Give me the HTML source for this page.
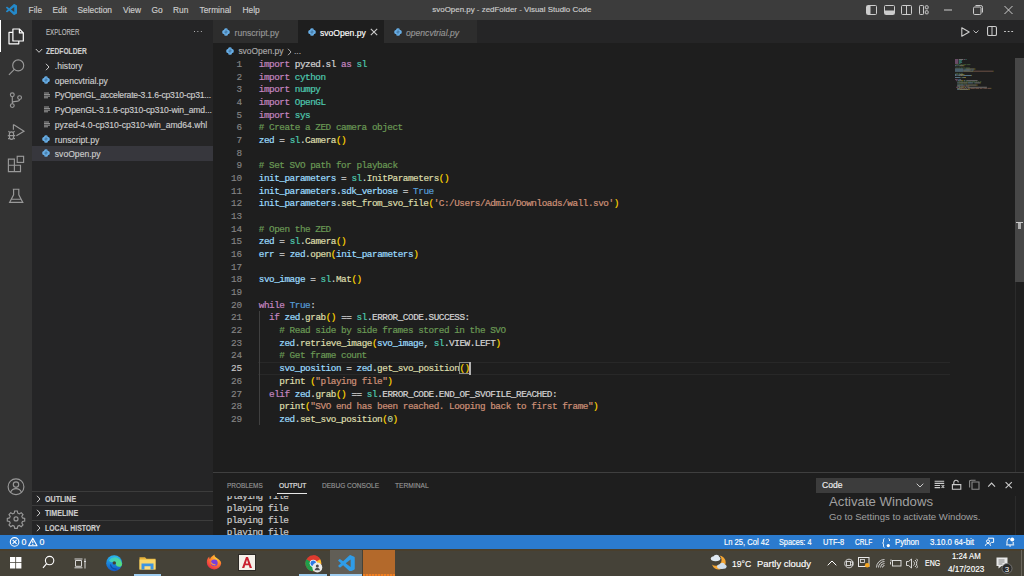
<!DOCTYPE html>
<html><head><meta charset="utf-8">
<style>
*{margin:0;padding:0;box-sizing:border-box}
html,body{width:1024px;height:576px;overflow:hidden;background:#1e1e1e;font-family:"Liberation Sans",sans-serif;position:relative}
.a{position:absolute}
.ui{position:absolute;font-family:"Liberation Sans",sans-serif;font-size:8.6px;color:#cccccc;white-space:nowrap;line-height:10px;height:10px;-webkit-text-stroke:0.15px currentColor}
.mono{font-family:"Liberation Mono",monospace;font-size:9.33px;letter-spacing:-0.455px;white-space:pre;line-height:12.67px;height:12.67px}
.ln{position:absolute;left:213.7px;width:28px;text-align:right;color:#858585;letter-spacing:-0.3px}
.ln.act{color:#c6c6c6}
.ln{-webkit-text-stroke:0.15px currentColor}
.code{position:absolute;left:258.75px;color:#d4d4d4;-webkit-text-stroke:0.2px currentColor}
.k{color:#c586c0}.t{color:#4ec9b0}.v{color:#9cdcfe}.f{color:#dcdcaa}.c{color:#6a9955}.s{color:#ce9178}.b{color:#569cd6}.y{color:#ffd700}.n{color:#b5cea8}.w{color:#d4d4d4}
svg{display:block}
.icon{position:absolute}
</style></head><body>
<!-- title bar -->
<div class="a" style="left:0;top:0;width:1024px;height:20px;background:#3c3c3c"></div>
<svg class="icon" style="left:6px;top:4px" width="11" height="11" viewBox="0 0 100 100"><path fill="#2489ca" d="M96.5 10.8 75.9.9a6.2 6.2 0 0 0-7.1 1.2L29.4 38 12.2 25a4.2 4.2 0 0 0-5.3.2L1.4 30.2a4.2 4.2 0 0 0 0 6.2L16.3 50 1.4 63.6a4.2 4.2 0 0 0 0 6.2l5.5 5a4.2 4.2 0 0 0 5.3.2l17.2-13L68.8 98a6.2 6.2 0 0 0 7.1 1.2l20.6-9.9a6.2 6.2 0 0 0 3.5-5.6V16.4a6.2 6.2 0 0 0-3.5-5.6ZM75 72.7 45.1 50 75 27.3Z"/></svg>
<div class="ui" style="left:28.6px;top:5px;font-size:8.4px">File</div>
<div class="ui" style="left:52.5px;top:5px;font-size:8.4px">Edit</div>
<div class="ui" style="left:77.5px;top:5px;font-size:8.4px">Selection</div>
<div class="ui" style="left:123px;top:5px;font-size:8.4px">View</div>
<div class="ui" style="left:151.5px;top:5px;font-size:8.4px">Go</div>
<div class="ui" style="left:173px;top:5px;font-size:8.4px">Run</div>
<div class="ui" style="left:199.5px;top:5px;font-size:8.4px">Terminal</div>
<div class="ui" style="left:242.5px;top:5px;font-size:8.4px">Help</div>
<div class="ui" style="left:432.3px;top:5px;font-size:7.95px">svoOpen.py - zedFolder - Visual Studio Code</div>
<!-- layout icons -->
<svg class="icon" style="left:866px;top:5px" width="11" height="10" viewBox="0 0 11 10"><rect x="0.5" y="0.5" width="10" height="9" rx="1" fill="none" stroke="#cccccc"/><rect x="1" y="1" width="3.5" height="8" fill="#cccccc"/></svg>
<svg class="icon" style="left:883.5px;top:5px" width="11" height="10" viewBox="0 0 11 10"><rect x="0.5" y="0.5" width="10" height="9" rx="1" fill="none" stroke="#cccccc"/><rect x="1" y="5.5" width="9" height="3.5" fill="#cccccc"/></svg>
<svg class="icon" style="left:900.5px;top:5px" width="11" height="10" viewBox="0 0 11 10"><rect x="0.5" y="0.5" width="10" height="9" rx="1" fill="none" stroke="#cccccc"/><path d="M5.5 1v8" stroke="#cccccc"/></svg>
<svg class="icon" style="left:918.5px;top:5px" width="10" height="10" viewBox="0 0 10 10"><rect x="0.5" y="0.5" width="4" height="9" rx="0.8" fill="none" stroke="#cccccc"/><rect x="6.3" y="0.8" width="2.8" height="3" rx="0.6" fill="none" stroke="#cccccc"/><rect x="6.3" y="5.8" width="2.8" height="3" rx="0.6" fill="none" stroke="#cccccc"/></svg>
<svg class="icon" style="left:944px;top:9px" width="8" height="2" viewBox="0 0 8 2"><path d="M0 1h8" stroke="#cccccc" stroke-width="1"/></svg>
<svg class="icon" style="left:973px;top:5px" width="10" height="10" viewBox="0 0 10 10"><rect x="0.5" y="2" width="7.5" height="7.5" rx="1.2" fill="none" stroke="#cccccc"/><path d="M2.5 0.5h5.2a1.8 1.8 0 0 1 1.8 1.8v5.2" fill="none" stroke="#cccccc"/></svg>
<svg class="icon" style="left:1004px;top:5px" width="9" height="10" viewBox="0 0 9 10"><path d="M0.5 1l8 8M8.5 1l-8 8" stroke="#cccccc" stroke-width="1"/></svg>

<!-- activity bar -->
<div class="a" style="left:0;top:20px;width:32px;height:515px;background:#333333"></div>
<div class="a" style="left:0;top:20px;width:1.2px;height:32px;background:#ffffff"></div>
<svg class="icon" style="left:0;top:20px" width="32" height="515" viewBox="0 20 32 515">
<g fill="none" stroke="#ffffff" stroke-width="1.2" stroke-linejoin="round"><path d="M12.9 29h6.5l3.9 3.9v8.1H12.9z"/><path d="M19.4 29v3.9h3.9"/><path d="M12.9 32.4H9v11.4h9.8V41"/></g>
<g fill="none" stroke="#999999" stroke-width="1.15">
<circle cx="18.2" cy="65.4" r="5.5"/><path d="M14.3 69.4 8.9 74.8"/>
<circle cx="12.3" cy="94.8" r="1.9"/><circle cx="12.3" cy="105.6" r="1.9"/><circle cx="19.6" cy="97.6" r="1.9"/><path d="M12.3 96.7v7M19.6 99.5c0 1.8-1.5 1.8-3.6 1.8s-3.7 0.3-3.7 1.6"/>
<path d="M13.4 124.6v5.2M13.4 124.6l10.6 6.6-7.6 4.6"/><path d="M9.4 134.2c0-1.4.9-2.3 2.1-2.3s2.1.9 2.1 2.3v2.6c0 1.6-.9 2.6-2.1 2.6s-2.1-1-2.1-2.6z"/><path d="M7.8 135.6h7.4M8 138.6h1.4M13.6 138.6h1.4M9.6 132.3l-1.2-1M13.4 132.3l1.2-1"/>
<path d="M8.4 159.1h6v6.1h6.1v6.4H8.4z"/><path d="M8.4 165.2h6v6.4"/><rect x="17.2" y="156.3" width="6.4" height="6.1"/>
<path d="M12.8 189.2h6.6M13.6 189.2v5.6L9.6 202.4h13.2l-4-7.6v-5.6M11.4 199.2h9.6"/>
<circle cx="16" cy="486.7" r="7.9"/><circle cx="16" cy="484.6" r="2.7"/><path d="M10.6 492.3c1-2.4 3-3.6 5.4-3.6s4.4 1.2 5.4 3.6"/>
<circle cx="16" cy="518.9" r="2"/><path d="M14.7 511h2.6l.5 2.2 1.5.7 1.9-1.2 1.8 1.8-1.2 1.9.7 1.5 2.2.5v2.6l-2.2.5-.7 1.5 1.2 1.9-1.8 1.8-1.9-1.2-1.5.7-.5 2.2h-2.6l-.5-2.2-1.5-.7-1.9 1.2-1.8-1.8 1.2-1.9-.7-1.5-2.2-.5v-2.6l2.2-.5.7-1.5-1.2-1.9 1.8-1.8 1.9 1.2 1.5-.7z"/>
</g></svg>

<!-- sidebar -->
<div class="a" style="left:32px;top:20px;width:181px;height:515px;background:#252526"></div>
<div class="ui" style="left:45.6px;top:26.9px;font-size:8.5px;line-height:10px;height:10px;color:#bbbbbb;transform:scaleX(0.721);transform-origin:0 0">EXPLORER</div>
<div class="a" style="left:193.7px;top:30.6px;width:1.8px;height:1.8px;border-radius:50%;background:#e0e0e0;box-shadow:3.4px 0 0 #e0e0e0,6.8px 0 0 #e0e0e0"></div>
<svg class="icon" style="left:35px;top:47.5px" width="8" height="6" viewBox="0 0 8 6"><path d="M0.8 1l3.2 3.3L7.2 1" fill="none" stroke="#cccccc" stroke-width="1"/></svg>
<div class="ui" style="left:45.5px;top:45.9px;font-size:8.4px;line-height:10px;height:10px;color:#cccccc;font-weight:bold;transform:scaleX(0.795);transform-origin:0 0">ZEDFOLDER</div>
<svg class="icon" style="left:45px;top:62.5px" width="5" height="8" viewBox="0 0 5 8"><path d="M1 0.8l3 3.2-3 3.2" fill="none" stroke="#cccccc" stroke-width="1"/></svg>
<div class="ui" style="left:54.8px;top:61px">.history</div>
<div class="icon" style="left:42.5px;top:76.5px"><svg width="8" height="8" viewBox="0 0 16 16" style="margin:-0.2px 0 0 -0.5px"><g fill="#68aee6"><rect x="4.2" y="0.6" width="7.6" height="14.8" rx="3"/><rect x="0.6" y="4.2" width="14.8" height="7.6" rx="3"/></g><path d="M4.5 8.2h3.5v3.5" fill="none" stroke="#2a4f70" stroke-width="1.1"/><path d="M11.5 7.8H8V4.3" fill="none" stroke="#2a4f70" stroke-width="1.1"/><circle cx="10.2" cy="2.8" r="0.9" fill="#2a4f70"/><circle cx="5.8" cy="13.2" r="0.9" fill="#2a4f70"/></svg></div>
<div class="ui" style="left:54.8px;top:75.8px">opencvtrial.py</div>
<div class="icon" style="left:43px;top:91.5px"><svg width="8" height="8" viewBox="0 0 8 8"><path d="M1 1h5M1 2.6h6M1 4.2h6M1 5.8h4" stroke="#a8a8a8" stroke-width="0.9"/></svg></div>
<div class="ui" style="left:54.8px;top:90.3px;letter-spacing:-0.2px">PyOpenGL_accelerate-3.1.6-cp310-cp31...</div>
<div class="icon" style="left:43px;top:106px"><svg width="8" height="8" viewBox="0 0 8 8"><path d="M1 1h5M1 2.6h6M1 4.2h6M1 5.8h4" stroke="#a8a8a8" stroke-width="0.9"/></svg></div>
<div class="ui" style="left:54.8px;top:105px;letter-spacing:-0.12px">PyOpenGL-3.1.6-cp310-cp310-win_amd...</div>
<div class="icon" style="left:43px;top:120.7px"><svg width="8" height="8" viewBox="0 0 8 8"><path d="M1 1h5M1 2.6h6M1 4.2h6M1 5.8h4" stroke="#a8a8a8" stroke-width="0.9"/></svg></div>
<div class="ui" style="left:54.8px;top:119.6px">pyzed-4.0-cp310-cp310-win_amd64.whl</div>
<div class="icon" style="left:42.5px;top:135.5px"><svg width="8" height="8" viewBox="0 0 16 16" style="margin:-0.2px 0 0 -0.5px"><g fill="#68aee6"><rect x="4.2" y="0.6" width="7.6" height="14.8" rx="3"/><rect x="0.6" y="4.2" width="14.8" height="7.6" rx="3"/></g><path d="M4.5 8.2h3.5v3.5" fill="none" stroke="#2a4f70" stroke-width="1.1"/><path d="M11.5 7.8H8V4.3" fill="none" stroke="#2a4f70" stroke-width="1.1"/><circle cx="10.2" cy="2.8" r="0.9" fill="#2a4f70"/><circle cx="5.8" cy="13.2" r="0.9" fill="#2a4f70"/></svg></div>
<div class="ui" style="left:54.8px;top:134.8px">runscript.py</div>
<div class="a" style="left:32px;top:146.3px;width:181px;height:14.7px;background:#37373d"></div>
<div class="icon" style="left:42.5px;top:149.5px"><svg width="8" height="8" viewBox="0 0 16 16" style="margin:-0.2px 0 0 -0.5px"><g fill="#68aee6"><rect x="4.2" y="0.6" width="7.6" height="14.8" rx="3"/><rect x="0.6" y="4.2" width="14.8" height="7.6" rx="3"/></g><path d="M4.5 8.2h3.5v3.5" fill="none" stroke="#2a4f70" stroke-width="1.1"/><path d="M11.5 7.8H8V4.3" fill="none" stroke="#2a4f70" stroke-width="1.1"/><circle cx="10.2" cy="2.8" r="0.9" fill="#2a4f70"/><circle cx="5.8" cy="13.2" r="0.9" fill="#2a4f70"/></svg></div>
<div class="ui" style="left:54.8px;top:148.5px">svoOpen.py</div>
<!-- sidebar bottom sections -->
<div class="a" style="left:32px;top:490.5px;width:181px;height:1px;background:#3c3c3c"></div>
<div class="a" style="left:32px;top:505px;width:181px;height:1px;background:#3c3c3c"></div>
<div class="a" style="left:32px;top:519.7px;width:181px;height:1px;background:#3c3c3c"></div>
<svg class="icon" style="left:36px;top:494.5px" width="5" height="8" viewBox="0 0 5 8"><path d="M1 0.8l3 3.2-3 3.2" fill="none" stroke="#cccccc" stroke-width="1"/></svg>
<div class="ui" style="left:45.3px;top:495px;font-size:8.2px;line-height:10px;height:10px;color:#cccccc;font-weight:bold;transform:scaleX(0.868);transform-origin:0 0">OUTLINE</div>
<svg class="icon" style="left:36px;top:509px" width="5" height="8" viewBox="0 0 5 8"><path d="M1 0.8l3 3.2-3 3.2" fill="none" stroke="#cccccc" stroke-width="1"/></svg>
<div class="ui" style="left:45.3px;top:509.1px;font-size:8.2px;line-height:10px;height:10px;color:#cccccc;font-weight:bold;transform:scaleX(0.869);transform-origin:0 0">TIMELINE</div>
<svg class="icon" style="left:36px;top:524px" width="5" height="8" viewBox="0 0 5 8"><path d="M1 0.8l3 3.2-3 3.2" fill="none" stroke="#cccccc" stroke-width="1"/></svg>
<div class="ui" style="left:45.3px;top:523.9px;font-size:8.2px;line-height:10px;height:10px;color:#cccccc;font-weight:bold;transform:scaleX(0.835);transform-origin:0 0">LOCAL HISTORY</div>

<!-- editor tabs -->
<div class="a" style="left:213px;top:20px;width:811px;height:23px;background:#252526"></div>
<div class="a" style="left:213px;top:20px;width:85px;height:23px;background:#2d2d2d"></div>
<div class="a" style="left:298px;top:20px;width:86px;height:23px;background:#1e1e1e"></div>
<div class="a" style="left:384px;top:20px;width:93px;height:23px;background:#2d2d2d"></div>
<div class="icon" style="left:222.5px;top:28px"><svg width="8" height="8" viewBox="0 0 16 16" style="margin:-0.2px 0 0 -0.5px"><g fill="#68aee6"><rect x="4.2" y="0.6" width="7.6" height="14.8" rx="3"/><rect x="0.6" y="4.2" width="14.8" height="7.6" rx="3"/></g><path d="M4.5 8.2h3.5v3.5" fill="none" stroke="#2a4f70" stroke-width="1.1"/><path d="M11.5 7.8H8V4.3" fill="none" stroke="#2a4f70" stroke-width="1.1"/><circle cx="10.2" cy="2.8" r="0.9" fill="#2a4f70"/><circle cx="5.8" cy="13.2" r="0.9" fill="#2a4f70"/></svg></div>
<div class="ui" style="left:234.6px;top:27.5px;color:#969696">runscript.py</div>
<div class="icon" style="left:308px;top:28px"><svg width="8" height="8" viewBox="0 0 16 16" style="margin:-0.2px 0 0 -0.5px"><g fill="#68aee6"><rect x="4.2" y="0.6" width="7.6" height="14.8" rx="3"/><rect x="0.6" y="4.2" width="14.8" height="7.6" rx="3"/></g><path d="M4.5 8.2h3.5v3.5" fill="none" stroke="#2a4f70" stroke-width="1.1"/><path d="M11.5 7.8H8V4.3" fill="none" stroke="#2a4f70" stroke-width="1.1"/><circle cx="10.2" cy="2.8" r="0.9" fill="#2a4f70"/><circle cx="5.8" cy="13.2" r="0.9" fill="#2a4f70"/></svg></div>
<div class="ui" style="left:320px;top:27.5px;color:#ffffff">svoOpen.py</div>
<svg class="icon" style="left:370px;top:27.5px" width="8" height="8" viewBox="0 0 8 8"><path d="M0.8 0.8l6.4 6.4M7.2 0.8L0.8 7.2" stroke="#cccccc" stroke-width="1.1"/></svg>
<div class="icon" style="left:394px;top:28px"><svg width="8" height="8" viewBox="0 0 16 16" style="margin:-0.2px 0 0 -0.5px"><g fill="#68aee6"><rect x="4.2" y="0.6" width="7.6" height="14.8" rx="3"/><rect x="0.6" y="4.2" width="14.8" height="7.6" rx="3"/></g><path d="M4.5 8.2h3.5v3.5" fill="none" stroke="#2a4f70" stroke-width="1.1"/><path d="M11.5 7.8H8V4.3" fill="none" stroke="#2a4f70" stroke-width="1.1"/><circle cx="10.2" cy="2.8" r="0.9" fill="#2a4f70"/><circle cx="5.8" cy="13.2" r="0.9" fill="#2a4f70"/></svg></div>
<div class="ui" style="left:406px;top:27.5px;color:#969696;font-style:italic">opencvtrial.py</div>
<!-- editor actions -->
<svg class="icon" style="left:961px;top:26.5px" width="9" height="10" viewBox="0 0 9 10"><path d="M0.8 0.8v8.4l7.4-4.2z" fill="none" stroke="#cccccc" stroke-width="1.1" stroke-linejoin="round"/></svg>
<svg class="icon" style="left:972.5px;top:30px" width="6" height="4" viewBox="0 0 6 4"><path d="M0.5 0.5l2.5 2.5 2.5-2.5" fill="none" stroke="#cccccc" stroke-width="0.9"/></svg>
<svg class="icon" style="left:986.7px;top:26.3px" width="10" height="10" viewBox="0 0 10 10"><rect x="0.55" y="0.55" width="8.9" height="8.9" rx="1.3" fill="none" stroke="#cccccc" stroke-width="1.1"/><path d="M5 1v8" stroke="#cccccc" stroke-width="1"/></svg>
<div class="a" style="left:1004px;top:30.6px;width:1.8px;height:1.8px;border-radius:50%;background:#cccccc;box-shadow:3.6px 0 0 #cccccc,7.2px 0 0 #cccccc"></div>

<!-- breadcrumbs -->
<div class="icon" style="left:226.5px;top:47px"><svg width="8" height="8" viewBox="0 0 16 16" style="margin:-0.2px 0 0 -0.5px"><g fill="#68aee6"><rect x="4.2" y="0.6" width="7.6" height="14.8" rx="3"/><rect x="0.6" y="4.2" width="14.8" height="7.6" rx="3"/></g><path d="M4.5 8.2h3.5v3.5" fill="none" stroke="#2a4f70" stroke-width="1.1"/><path d="M11.5 7.8H8V4.3" fill="none" stroke="#2a4f70" stroke-width="1.1"/><circle cx="10.2" cy="2.8" r="0.9" fill="#2a4f70"/><circle cx="5.8" cy="13.2" r="0.9" fill="#2a4f70"/></svg></div>
<div class="ui" style="left:238.4px;top:46px;color:#a9a9a9;font-size:8.45px">svoOpen.py</div>
<svg class="icon" style="left:286.5px;top:47.5px" width="5" height="8" viewBox="0 0 5 8"><path d="M1 0.8l3 3.2-3 3.2" fill="none" stroke="#a9a9a9" stroke-width="1"/></svg>
<div class="ui" style="left:294px;top:46px;color:#a9a9a9;font-size:8.45px">...</div>

<!-- current line highlight -->
<div class="a" style="left:258px;top:361.8px;width:692px;height:13px;border-top:1px solid #282828;border-bottom:1px solid #282828"></div>
<!-- indent guide -->
<div class="a" style="left:259px;top:311px;width:1px;height:114px;background:#404040"></div>

<div class="ln mono" style="top:59.00px">1</div>
<div class="code mono" style="top:59.00px"><span class="k">import</span> <span class="w">pyzed.sl</span> <span class="k">as</span> <span class="t">sl</span></div>
<div class="ln mono" style="top:71.67px">2</div>
<div class="code mono" style="top:71.67px"><span class="k">import</span> <span class="t">cython</span></div>
<div class="ln mono" style="top:84.35px">3</div>
<div class="code mono" style="top:84.35px"><span class="k">import</span> <span class="t">numpy</span></div>
<div class="ln mono" style="top:97.02px">4</div>
<div class="code mono" style="top:97.02px"><span class="k">import</span> <span class="t">OpenGL</span></div>
<div class="ln mono" style="top:109.69px">5</div>
<div class="code mono" style="top:109.69px"><span class="k">import</span> <span class="t">sys</span></div>
<div class="ln mono" style="top:122.37px">6</div>
<div class="code mono" style="top:122.37px"><span class="c"># Create a ZED camera object</span></div>
<div class="ln mono" style="top:135.04px">7</div>
<div class="code mono" style="top:135.04px"><span class="v">zed</span> <span class="w">=</span> <span class="t">sl</span><span class="w">.</span><span class="f">Camera</span><span class="y">()</span></div>
<div class="ln mono" style="top:147.71px">8</div>
<div class="ln mono" style="top:160.38px">9</div>
<div class="code mono" style="top:160.38px"><span class="c"># Set SVO path for playback</span></div>
<div class="ln mono" style="top:173.06px">10</div>
<div class="code mono" style="top:173.06px"><span class="v">init_parameters</span> <span class="w">=</span> <span class="t">sl</span><span class="w">.</span><span class="f">InitParameters</span><span class="y">()</span></div>
<div class="ln mono" style="top:185.73px">11</div>
<div class="code mono" style="top:185.73px"><span class="v">init_parameters</span><span class="w">.</span><span class="v">sdk_verbose</span> <span class="w">=</span> <span class="b">True</span></div>
<div class="ln mono" style="top:198.40px">12</div>
<div class="code mono" style="top:198.40px"><span class="v">init_parameters</span><span class="w">.</span><span class="f">set_from_svo_file</span><span class="y">(</span><span class="s">&#x27;C:/Users/Admin/Downloads/wall.svo&#x27;</span><span class="y">)</span></div>
<div class="ln mono" style="top:211.08px">13</div>
<div class="ln mono" style="top:223.75px">14</div>
<div class="code mono" style="top:223.75px"><span class="c"># Open the ZED</span></div>
<div class="ln mono" style="top:236.42px">15</div>
<div class="code mono" style="top:236.42px"><span class="v">zed</span> <span class="w">=</span> <span class="t">sl</span><span class="w">.</span><span class="f">Camera</span><span class="y">()</span></div>
<div class="ln mono" style="top:249.09px">16</div>
<div class="code mono" style="top:249.09px"><span class="v">err</span> <span class="w">=</span> <span class="v">zed</span><span class="w">.</span><span class="f">open</span><span class="y">(</span><span class="v">init_parameters</span><span class="y">)</span></div>
<div class="ln mono" style="top:261.77px">17</div>
<div class="ln mono" style="top:274.44px">18</div>
<div class="code mono" style="top:274.44px"><span class="v">svo_image</span> <span class="w">=</span> <span class="t">sl</span><span class="w">.</span><span class="f">Mat</span><span class="y">()</span></div>
<div class="ln mono" style="top:287.11px">19</div>
<div class="ln mono" style="top:299.79px">20</div>
<div class="code mono" style="top:299.79px"><span class="k">while</span> <span class="b">True</span><span class="w">:</span></div>
<div class="ln mono" style="top:312.46px">21</div>
<div class="code mono" style="top:312.46px">  <span class="k">if</span> <span class="v">zed</span><span class="w">.</span><span class="f">grab</span><span class="y">()</span> <span class="w">==</span> <span class="t">sl</span><span class="w">.ERROR_CODE.SUCCESS:</span></div>
<div class="ln mono" style="top:325.13px">22</div>
<div class="code mono" style="top:325.13px">    <span class="c"># Read side by side frames stored in the SVO</span></div>
<div class="ln mono" style="top:337.81px">23</div>
<div class="code mono" style="top:337.81px">    <span class="v">zed</span><span class="w">.</span><span class="f">retrieve_image</span><span class="y">(</span><span class="v">svo_image</span><span class="w">, </span><span class="t">sl</span><span class="w">.VIEW.LEFT</span><span class="y">)</span></div>
<div class="ln mono" style="top:350.48px">24</div>
<div class="code mono" style="top:350.48px">    <span class="c"># Get frame count</span></div>
<div class="ln act mono" style="top:363.15px">25</div>
<div class="code mono" style="top:363.15px">    <span class="v">svo_position</span> <span class="w">=</span> <span class="v">zed</span><span class="w">.</span><span class="f">get_svo_position</span><span class="y bm">(</span><span class="y bm2">)</span></div>
<div class="ln mono" style="top:375.82px">26</div>
<div class="code mono" style="top:375.82px">    <span class="f">print</span> <span class="y">(</span><span class="s">&quot;playing file&quot;</span><span class="y">)</span></div>
<div class="ln mono" style="top:388.50px">27</div>
<div class="code mono" style="top:388.50px">  <span class="k">elif</span> <span class="v">zed</span><span class="w">.</span><span class="f">grab</span><span class="y">()</span> <span class="w">==</span> <span class="t">sl</span><span class="w">.ERROR_CODE.END_OF_SVOFILE_REACHED:</span></div>
<div class="ln mono" style="top:401.17px">28</div>
<div class="code mono" style="top:401.17px">    <span class="f">print</span><span class="y">(</span><span class="s">&quot;SVO end has been reached. Looping back to first frame&quot;</span><span class="y">)</span></div>
<div class="ln mono" style="top:413.84px">29</div>
<div class="code mono" style="top:413.84px">    <span class="v">zed</span><span class="w">.</span><span class="f">set_svo_position</span><span class="y">(</span><span class="n">0</span><span class="y">)</span></div>
<div class="a" style="left:459px;top:362.4px;width:10.5px;height:12px;border:1px solid #8a8a8a"></div>
<div class="a" style="left:469.3px;top:362.2px;width:1.3px;height:12.4px;background:#b0b0b0"></div>

<!-- minimap -->
<svg class="icon" style="left:955px;top:58.5px;opacity:0.6" width="40" height="32" viewBox="0 0 40 32"><rect x="0.00" y="0.00" width="3.30" height="0.75" fill="#c586c0"/><rect x="3.85" y="0.00" width="4.40" height="0.75" fill="#d4d4d4"/><rect x="8.80" y="0.00" width="1.10" height="0.75" fill="#c586c0"/><rect x="10.45" y="0.00" width="1.10" height="0.75" fill="#4ec9b0"/><rect x="0.00" y="1.07" width="3.30" height="0.75" fill="#c586c0"/><rect x="3.85" y="1.07" width="3.30" height="0.75" fill="#4ec9b0"/><rect x="0.00" y="2.14" width="3.30" height="0.75" fill="#c586c0"/><rect x="3.85" y="2.14" width="2.75" height="0.75" fill="#4ec9b0"/><rect x="0.00" y="3.21" width="3.30" height="0.75" fill="#c586c0"/><rect x="3.85" y="3.21" width="3.30" height="0.75" fill="#4ec9b0"/><rect x="0.00" y="4.28" width="3.30" height="0.75" fill="#c586c0"/><rect x="3.85" y="4.28" width="1.65" height="0.75" fill="#4ec9b0"/><rect x="0.00" y="5.35" width="0.55" height="0.75" fill="#6a9955"/><rect x="1.10" y="5.35" width="3.30" height="0.75" fill="#6a9955"/><rect x="4.95" y="5.35" width="0.55" height="0.75" fill="#6a9955"/><rect x="6.05" y="5.35" width="1.65" height="0.75" fill="#6a9955"/><rect x="8.25" y="5.35" width="3.30" height="0.75" fill="#6a9955"/><rect x="12.10" y="5.35" width="3.30" height="0.75" fill="#6a9955"/><rect x="0.00" y="6.42" width="1.65" height="0.75" fill="#9cdcfe"/><rect x="2.20" y="6.42" width="0.55" height="0.75" fill="#d4d4d4"/><rect x="3.30" y="6.42" width="1.10" height="0.75" fill="#4ec9b0"/><rect x="4.40" y="6.42" width="0.55" height="0.75" fill="#d4d4d4"/><rect x="4.95" y="6.42" width="3.30" height="0.75" fill="#dcdcaa"/><rect x="8.25" y="6.42" width="1.10" height="0.75" fill="#ffd700"/><rect x="0.00" y="8.56" width="0.55" height="0.75" fill="#6a9955"/><rect x="1.10" y="8.56" width="1.65" height="0.75" fill="#6a9955"/><rect x="3.30" y="8.56" width="1.65" height="0.75" fill="#6a9955"/><rect x="5.50" y="8.56" width="2.20" height="0.75" fill="#6a9955"/><rect x="8.25" y="8.56" width="1.65" height="0.75" fill="#6a9955"/><rect x="10.45" y="8.56" width="4.40" height="0.75" fill="#6a9955"/><rect x="0.00" y="9.63" width="8.25" height="0.75" fill="#9cdcfe"/><rect x="8.80" y="9.63" width="0.55" height="0.75" fill="#d4d4d4"/><rect x="9.90" y="9.63" width="1.10" height="0.75" fill="#4ec9b0"/><rect x="11.00" y="9.63" width="0.55" height="0.75" fill="#d4d4d4"/><rect x="11.55" y="9.63" width="7.70" height="0.75" fill="#dcdcaa"/><rect x="19.25" y="9.63" width="1.10" height="0.75" fill="#ffd700"/><rect x="0.00" y="10.70" width="8.25" height="0.75" fill="#9cdcfe"/><rect x="8.25" y="10.70" width="0.55" height="0.75" fill="#d4d4d4"/><rect x="8.80" y="10.70" width="6.05" height="0.75" fill="#9cdcfe"/><rect x="15.40" y="10.70" width="0.55" height="0.75" fill="#d4d4d4"/><rect x="16.50" y="10.70" width="2.20" height="0.75" fill="#569cd6"/><rect x="0.00" y="11.77" width="8.25" height="0.75" fill="#9cdcfe"/><rect x="8.25" y="11.77" width="0.55" height="0.75" fill="#d4d4d4"/><rect x="8.80" y="11.77" width="9.35" height="0.75" fill="#dcdcaa"/><rect x="18.15" y="11.77" width="0.55" height="0.75" fill="#ffd700"/><rect x="18.70" y="11.77" width="19.25" height="0.75" fill="#ce9178"/><rect x="37.95" y="11.77" width="0.55" height="0.75" fill="#ffd700"/><rect x="0.00" y="13.91" width="0.55" height="0.75" fill="#6a9955"/><rect x="1.10" y="13.91" width="2.20" height="0.75" fill="#6a9955"/><rect x="3.85" y="13.91" width="1.65" height="0.75" fill="#6a9955"/><rect x="6.05" y="13.91" width="1.65" height="0.75" fill="#6a9955"/><rect x="0.00" y="14.98" width="1.65" height="0.75" fill="#9cdcfe"/><rect x="2.20" y="14.98" width="0.55" height="0.75" fill="#d4d4d4"/><rect x="3.30" y="14.98" width="1.10" height="0.75" fill="#4ec9b0"/><rect x="4.40" y="14.98" width="0.55" height="0.75" fill="#d4d4d4"/><rect x="4.95" y="14.98" width="3.30" height="0.75" fill="#dcdcaa"/><rect x="8.25" y="14.98" width="1.10" height="0.75" fill="#ffd700"/><rect x="0.00" y="16.05" width="1.65" height="0.75" fill="#9cdcfe"/><rect x="2.20" y="16.05" width="0.55" height="0.75" fill="#d4d4d4"/><rect x="3.30" y="16.05" width="1.65" height="0.75" fill="#9cdcfe"/><rect x="4.95" y="16.05" width="0.55" height="0.75" fill="#d4d4d4"/><rect x="5.50" y="16.05" width="2.20" height="0.75" fill="#dcdcaa"/><rect x="7.70" y="16.05" width="0.55" height="0.75" fill="#ffd700"/><rect x="8.25" y="16.05" width="8.25" height="0.75" fill="#9cdcfe"/><rect x="16.50" y="16.05" width="0.55" height="0.75" fill="#ffd700"/><rect x="0.00" y="18.19" width="4.95" height="0.75" fill="#9cdcfe"/><rect x="5.50" y="18.19" width="0.55" height="0.75" fill="#d4d4d4"/><rect x="6.60" y="18.19" width="1.10" height="0.75" fill="#4ec9b0"/><rect x="7.70" y="18.19" width="0.55" height="0.75" fill="#d4d4d4"/><rect x="8.25" y="18.19" width="1.65" height="0.75" fill="#dcdcaa"/><rect x="9.90" y="18.19" width="1.10" height="0.75" fill="#ffd700"/><rect x="0.00" y="20.33" width="2.75" height="0.75" fill="#c586c0"/><rect x="3.30" y="20.33" width="2.20" height="0.75" fill="#569cd6"/><rect x="5.50" y="20.33" width="0.55" height="0.75" fill="#d4d4d4"/><rect x="1.10" y="21.40" width="1.10" height="0.75" fill="#c586c0"/><rect x="2.75" y="21.40" width="1.65" height="0.75" fill="#9cdcfe"/><rect x="4.40" y="21.40" width="0.55" height="0.75" fill="#d4d4d4"/><rect x="4.95" y="21.40" width="2.20" height="0.75" fill="#dcdcaa"/><rect x="7.15" y="21.40" width="1.10" height="0.75" fill="#ffd700"/><rect x="8.80" y="21.40" width="1.10" height="0.75" fill="#d4d4d4"/><rect x="10.45" y="21.40" width="1.10" height="0.75" fill="#4ec9b0"/><rect x="11.55" y="21.40" width="11.00" height="0.75" fill="#d4d4d4"/><rect x="2.20" y="22.47" width="0.55" height="0.75" fill="#6a9955"/><rect x="3.30" y="22.47" width="2.20" height="0.75" fill="#6a9955"/><rect x="6.05" y="22.47" width="2.20" height="0.75" fill="#6a9955"/><rect x="8.80" y="22.47" width="1.10" height="0.75" fill="#6a9955"/><rect x="10.45" y="22.47" width="2.20" height="0.75" fill="#6a9955"/><rect x="13.20" y="22.47" width="3.30" height="0.75" fill="#6a9955"/><rect x="17.05" y="22.47" width="3.30" height="0.75" fill="#6a9955"/><rect x="20.90" y="22.47" width="1.10" height="0.75" fill="#6a9955"/><rect x="22.55" y="22.47" width="1.65" height="0.75" fill="#6a9955"/><rect x="24.75" y="22.47" width="1.65" height="0.75" fill="#6a9955"/><rect x="2.20" y="23.54" width="1.65" height="0.75" fill="#9cdcfe"/><rect x="3.85" y="23.54" width="0.55" height="0.75" fill="#d4d4d4"/><rect x="4.40" y="23.54" width="7.70" height="0.75" fill="#dcdcaa"/><rect x="12.10" y="23.54" width="0.55" height="0.75" fill="#ffd700"/><rect x="12.65" y="23.54" width="4.95" height="0.75" fill="#9cdcfe"/><rect x="17.60" y="23.54" width="0.55" height="0.75" fill="#d4d4d4"/><rect x="18.70" y="23.54" width="1.10" height="0.75" fill="#4ec9b0"/><rect x="19.80" y="23.54" width="5.50" height="0.75" fill="#d4d4d4"/><rect x="25.30" y="23.54" width="0.55" height="0.75" fill="#ffd700"/><rect x="2.20" y="24.61" width="0.55" height="0.75" fill="#6a9955"/><rect x="3.30" y="24.61" width="1.65" height="0.75" fill="#6a9955"/><rect x="5.50" y="24.61" width="2.75" height="0.75" fill="#6a9955"/><rect x="8.80" y="24.61" width="2.75" height="0.75" fill="#6a9955"/><rect x="2.20" y="25.68" width="6.60" height="0.75" fill="#9cdcfe"/><rect x="9.35" y="25.68" width="0.55" height="0.75" fill="#d4d4d4"/><rect x="10.45" y="25.68" width="1.65" height="0.75" fill="#9cdcfe"/><rect x="12.10" y="25.68" width="0.55" height="0.75" fill="#d4d4d4"/><rect x="12.65" y="25.68" width="8.80" height="0.75" fill="#dcdcaa"/><rect x="21.45" y="25.68" width="0.55" height="0.75" fill="#ffd700"/><rect x="22.00" y="25.68" width="0.55" height="0.75" fill="#ffd700"/><rect x="2.20" y="26.75" width="2.75" height="0.75" fill="#dcdcaa"/><rect x="5.50" y="26.75" width="0.55" height="0.75" fill="#ffd700"/><rect x="6.05" y="26.75" width="4.40" height="0.75" fill="#ce9178"/><rect x="11.00" y="26.75" width="2.75" height="0.75" fill="#ce9178"/><rect x="13.75" y="26.75" width="0.55" height="0.75" fill="#ffd700"/><rect x="1.10" y="27.82" width="2.20" height="0.75" fill="#c586c0"/><rect x="3.85" y="27.82" width="1.65" height="0.75" fill="#9cdcfe"/><rect x="5.50" y="27.82" width="0.55" height="0.75" fill="#d4d4d4"/><rect x="6.05" y="27.82" width="2.20" height="0.75" fill="#dcdcaa"/><rect x="8.25" y="27.82" width="1.10" height="0.75" fill="#ffd700"/><rect x="9.90" y="27.82" width="1.10" height="0.75" fill="#d4d4d4"/><rect x="11.55" y="27.82" width="1.10" height="0.75" fill="#4ec9b0"/><rect x="12.65" y="27.82" width="19.25" height="0.75" fill="#d4d4d4"/><rect x="2.20" y="28.89" width="2.75" height="0.75" fill="#dcdcaa"/><rect x="4.95" y="28.89" width="0.55" height="0.75" fill="#ffd700"/><rect x="5.50" y="28.89" width="2.20" height="0.75" fill="#ce9178"/><rect x="8.25" y="28.89" width="1.65" height="0.75" fill="#ce9178"/><rect x="10.45" y="28.89" width="1.65" height="0.75" fill="#ce9178"/><rect x="12.65" y="28.89" width="2.20" height="0.75" fill="#ce9178"/><rect x="15.40" y="28.89" width="4.40" height="0.75" fill="#ce9178"/><rect x="20.35" y="28.89" width="3.85" height="0.75" fill="#ce9178"/><rect x="24.75" y="28.89" width="2.20" height="0.75" fill="#ce9178"/><rect x="27.50" y="28.89" width="1.10" height="0.75" fill="#ce9178"/><rect x="29.15" y="28.89" width="2.75" height="0.75" fill="#ce9178"/><rect x="32.45" y="28.89" width="3.30" height="0.75" fill="#ce9178"/><rect x="35.75" y="28.89" width="0.55" height="0.75" fill="#ffd700"/><rect x="2.20" y="29.96" width="1.65" height="0.75" fill="#9cdcfe"/><rect x="3.85" y="29.96" width="0.55" height="0.75" fill="#d4d4d4"/><rect x="4.40" y="29.96" width="8.80" height="0.75" fill="#dcdcaa"/><rect x="13.20" y="29.96" width="0.55" height="0.75" fill="#ffd700"/><rect x="13.75" y="29.96" width="0.55" height="0.75" fill="#b5cea8"/><rect x="14.30" y="29.96" width="0.55" height="0.75" fill="#ffd700"/></svg>
<!-- scrollbar -->
<div class="a" style="left:1014.8px;top:58px;width:1px;height:415px;background:#2b2b2b"></div>
<div class="a" style="left:1015px;top:58px;width:9px;height:223.5px;background:#474747"></div>
<div class="a" style="left:1016.3px;top:222px;width:6.4px;height:1.3px;background:#c8c8c8"></div>
<div class="a" style="left:1017.8px;top:222.5px;width:3.6px;height:6.5px;background:#b0b0b0"></div>

<!-- panel -->
<div class="a" style="left:213px;top:472.3px;width:811px;height:1.2px;background:#3f3f3f"></div>
<div class="ui" style="left:226.75px;top:480.70px;font-size:8px;line-height:10px;height:10px;color:#969696;transform:scaleX(0.804);transform-origin:0 0">PROBLEMS</div>
<div class="ui" style="left:278.5px;top:480.70px;font-size:8px;line-height:10px;height:10px;color:#e7e7e7;transform:scaleX(0.833);transform-origin:0 0">OUTPUT</div>
<div class="a" style="left:277px;top:493px;width:30px;height:1px;background:#e7e7e7"></div>
<div class="ui" style="left:321.75px;top:480.70px;font-size:8px;line-height:10px;height:10px;color:#969696;transform:scaleX(0.817);transform-origin:0 0">DEBUG CONSOLE</div>
<div class="ui" style="left:395px;top:480.70px;font-size:8px;line-height:10px;height:10px;color:#969696;transform:scaleX(0.834);transform-origin:0 0">TERMINAL</div>
<div class="a" style="left:815.5px;top:477.5px;width:114px;height:15.3px;background:#3c3c3c"></div>
<div class="ui" style="left:822px;top:480px;font-size:8.6px;color:#f0f0f0">Code</div>
<svg class="icon" style="left:916px;top:482.5px" width="8" height="5" viewBox="0 0 8 5"><path d="M0.7 0.7l3.3 3.3 3.3-3.3" fill="none" stroke="#cccccc" stroke-width="1"/></svg>
<svg class="icon" style="left:928px;top:474px" width="96" height="22" viewBox="928 474 96 22"><g fill="none" stroke-width="1.1">
<path d="M934.6 481.3h9.6M934.6 483.4h9.6M934.6 485.5h5.5M934.6 487.6h5.5M941.6 485.2l2.6 2.6M944.2 485.2l-2.6 2.6" stroke="#cccccc"/>
<path d="M952.4 484.6h8.4v4.6h-8.4z" stroke="#cccccc"/><path d="M953.8 484.6v-1.8a2.3 2.3 0 0 1 4.6 -0.4" stroke="#cccccc"/>
<path d="M972 482h7v7.2h-7zM969.6 487.6v-6.8l1.4-0.6h4.6" stroke="#8a8a8a"/>
<path d="M988.2 486.6l3.4-3.6 3.4 3.6" stroke="#cccccc"/>
<path d="M1005.6 482.2l6.2 6M1011.8 482.2l-6.2 6" stroke="#cccccc"/>
</g></svg>
<div class="a" style="left:213px;top:496px;width:811px;height:39px;overflow:hidden">
<div class="mono" style="position:absolute;left:13.75px;top:-4.9px;color:#cccccc;line-height:12.13px;height:auto;-webkit-text-stroke:0.2px currentColor">playing file
playing file
playing file
playing file</div>
</div>
<div class="a" style="left:1015px;top:496px;width:1px;height:39px;background:#2b2b2b"></div>
<div class="ui" style="left:829px;top:494.5px;font-size:13.2px;line-height:13px;height:14px;color:#a0a0a0;-webkit-text-stroke:0">Activate Windows</div>
<div class="ui" style="left:829px;top:512px;font-size:9.6px;color:#a0a0a0;-webkit-text-stroke:0">Go to Settings to activate Windows.</div>

<!-- status bar -->
<div class="a" style="left:0;top:535px;width:1024px;height:14.4px;background:#2b7bcf"></div>
<svg class="icon" style="left:0;top:534px" width="50" height="16" viewBox="0 534 50 16"><g fill="none" stroke="#ffffff" stroke-width="1.1">
<circle cx="14.6" cy="541.9" r="4.3"/><path d="M12.6 539.9l4 4M16.6 539.9l-4 4"/>
<path d="M32.8 538.2l4.2 7.6h-8.4z" stroke-linejoin="round"/><path d="M32.8 540.6v2.6M32.8 544v0.9"/></g></svg>
<div class="ui" style="left:21.5px;top:536.9px;font-size:8.8px;color:#ffffff">0</div>
<div class="ui" style="left:39.6px;top:536.9px;font-size:8.8px;color:#ffffff">0</div>
<div class="ui" style="left:723.6px;top:537.40px;font-size:8.4px;line-height:10px;height:10px;color:#ffffff;transform:scaleX(0.909);transform-origin:0 0">Ln 25, Col 42</div>
<div class="ui" style="left:779.4px;top:537.40px;font-size:8.4px;line-height:10px;height:10px;color:#ffffff;transform:scaleX(0.872);transform-origin:0 0">Spaces: 4</div>
<div class="ui" style="left:822.8px;top:537.40px;font-size:8.4px;line-height:10px;height:10px;color:#ffffff;transform:scaleX(0.89);transform-origin:0 0">UTF-8</div>
<div class="ui" style="left:854.5px;top:537.40px;font-size:8.4px;line-height:10px;height:10px;color:#ffffff;transform:scaleX(0.786);transform-origin:0 0">CRLF</div>
<svg class="icon" style="left:882px;top:537.5px" width="9" height="10" viewBox="0 0 9 10"><path d="M2.5 0.7C1.3 0.7 1.5 1.5 1.5 3s-.3 2-1 2c.7 0 1 .5 1 2s-.2 2.3 1 2.3M6.5 0.7c1.2 0 1 .8 1 2.3" fill="none" stroke="#ffffff" stroke-width="0.9"/><circle cx="6.3" cy="7.6" r="1.6" fill="#ffffff"/></svg>
<div class="ui" style="left:894.8px;top:537.40px;font-size:8.4px;line-height:10px;height:10px;color:#ffffff;transform:scaleX(0.924);transform-origin:0 0">Python</div>
<div class="ui" style="left:929.8px;top:537.40px;font-size:8.4px;line-height:10px;height:10px;color:#ffffff;transform:scaleX(0.945);transform-origin:0 0">3.10.0 64-bit</div>
<svg class="icon" style="left:980px;top:534px" width="44" height="16" viewBox="980 534 44 16"><g fill="none" stroke="#ffffff" stroke-width="1">
<path d="M988 538.2h5.6v4.2h-2.2l-1.6 1.4"/><circle cx="988" cy="541.3" r="1.5"/><path d="M985.3 545.8c0.5-1.6 1.5-2.4 2.7-2.4s2.2 0.8 2.7 2.4"/>
<path d="M1007 544.4v-3.2a3 3 0 0 1 3 -3M1006 544.9h8.2M1013.2 542v2.4M1009.2 546h1.8"/></g>
<circle cx="1012.2" cy="539.6" r="2" fill="#ffffff"/></svg>

<!-- taskbar -->
<div class="a" style="left:0;top:549.4px;width:1024px;height:26.6px;background:#454238"></div>
<div class="a" style="left:0;top:549.4px;width:1024px;height:1.3px;background:#4a3f2c"></div>
<!-- taskbar icons -->
<svg class="icon" style="left:10.2px;top:556.6px" width="12" height="12" viewBox="0 0 12 12"><path fill="#ffffff" d="M0 0h5.3v5.3H0zM6.1 0h5.3v5.3H6.1zM0 6.1h5.3v5.3H0zM6.1 6.1h5.3v5.3H6.1z"/></svg>
<svg class="icon" style="left:42px;top:555px" width="13" height="14" viewBox="0 0 13 14"><circle cx="7.6" cy="5.6" r="4.2" fill="none" stroke="#ffffff" stroke-width="1.1"/><path d="M4.6 8.7 1 12.8" stroke="#ffffff" stroke-width="1.2"/></svg>
<svg class="icon" style="left:74px;top:557.5px" width="12" height="11" viewBox="0 0 12 11"><g fill="none" stroke="#e8e8e8" stroke-width="0.9"><path d="M0.5 1h8M0.5 9.8h8M1.5 2.5h6v5.8h-6zM11 0.5v10M10 3.5h2"/></g></svg>
<svg class="icon" style="left:105.9px;top:554.5px" width="17" height="17" viewBox="0 0 17 17"><defs><linearGradient id="eg1" x1="0" y1="0" x2="0" y2="1"><stop offset="0" stop-color="#2bb8f0"/><stop offset="0.5" stop-color="#1a86dc"/><stop offset="1" stop-color="#1457c2"/></linearGradient><linearGradient id="eg2" x1="0" y1="0" x2="1" y2="1"><stop offset="0" stop-color="#36c6d8"/><stop offset="1" stop-color="#5ee36a"/></linearGradient></defs><circle cx="8.2" cy="8.2" r="8" fill="url(#eg1)"/><path d="M3 5.5C4.5 2.5 8 1.5 11 2.6c3 1.2 5 4 5 6.6 0 1.5-1 2.6-2.8 2.6-2 0-3.3-1.2-3.5-2.8-.1-1.2-1-1.9-2.2-1.9-1.8 0-3.4.6-4.5-1.6z" fill="url(#eg2)"/><circle cx="8.3" cy="7.9" r="1.7" fill="#453f33"/><path d="M4.5 9.5c0.5 3 3 4.8 6 4.6" fill="none" stroke="#0d4aa8" stroke-width="1.2"/></svg>
<svg class="icon" style="left:139px;top:555.5px" width="17" height="14" viewBox="0 0 17 14"><path d="M0.5 1.2h5.5l1.5 1.5h9v10.8H0.5z" fill="#e8b33a"/><path d="M0.5 3.5h16v10H0.5z" fill="#f9d76a"/><path d="M2.5 7.5h12v6h-3v-3.2h-6v3.2h-3z" fill="#3d95e2"/><path d="M5.5 10.3h6v3.2h-6z" fill="#f5f5f5" opacity="0.2"/></svg>
<div class="a" style="left:134px;top:574px;width:27px;height:2px;background:#9fcdf0"></div>
<svg class="icon" style="left:205.5px;top:554px" width="16" height="16" viewBox="0 0 16 16"><defs><radialGradient id="fg" cx="0.7" cy="0.2" r="0.9"><stop offset="0" stop-color="#ffd43b"/><stop offset="0.45" stop-color="#ff8a2b"/><stop offset="1" stop-color="#e8234a"/></radialGradient></defs><path d="M8 15.5A7.3 7.3 0 0 1 0.8 8.2C0.8 5.5 2 3.5 3.3 2.7 3.2 3.8 3.5 4.6 4 5 4.6 3 6.8 1.6 8.5 0.5c-0.3 1.6 0.8 2.6 2.2 3.4 2.6 1.5 4.5 3 4.5 5.6A7.1 7.1 0 0 1 8 15.5z" fill="url(#fg)"/><circle cx="8.3" cy="8.8" r="3.4" fill="#7a3fd9"/><path d="M5 8.5c0.8 1.5 2.5 2.5 4.5 2.3" stroke="#ff9b3d" stroke-width="1.1" fill="none"/></svg>
<svg class="icon" style="left:237.5px;top:554px" width="18" height="17" viewBox="0 0 18 17"><rect x="0.5" y="0.5" width="17" height="16" fill="#f4efe8" stroke="#2d2a26" stroke-width="1"/><path d="M4 14 8 3h2l4 11h-2.3l-.9-2.7H7.2L6.3 14zM7.8 9.5h2.4L9 5.8z" fill="#c9202f"/></svg>
<svg class="icon" style="left:304.5px;top:554.5px" width="18" height="18" viewBox="0 0 18 18"><circle cx="8.3" cy="8.3" r="8" fill="#dd3b2f"/><path d="M8.3 8.3 1.4 12.3A8 8 0 0 0 8.3 16.3z" fill="#1e9e4a"/><path d="M8.3 8.3V0.3A8 8 0 0 1 15.2 4.3z" fill="#dd3b2f"/><path d="M8.3 8.3 15.2 4.3A8 8 0 0 1 8.3 16.3z" fill="#fbc02d"/><path d="M8.3 8.3 1.4 12.3A8 8 0 0 1 1.4 4.3z" fill="#1e9e4a"/><circle cx="8.3" cy="8.3" r="3.6" fill="#ffffff"/><circle cx="8.3" cy="8.3" r="2.8" fill="#2b78e4"/><circle cx="12.3" cy="12.5" r="5" fill="#e8e8e8"/><circle cx="12.3" cy="11" r="1.5" fill="#4a4a4a"/><path d="M9.6 15.3c0.3-1.6 1.3-2.5 2.7-2.5s2.4 0.9 2.7 2.5z" fill="#4a4a4a"/></svg>
<div class="a" style="left:299px;top:574px;width:27.5px;height:2px;background:#9fcdf0"></div>
<div class="a" style="left:329.7px;top:549.5px;width:32.3px;height:26.5px;background:#615e56"></div>
<svg class="icon" style="left:337.5px;top:554.5px" width="17" height="16.5" viewBox="0 0 100 100"><path fill="#2f9ce8" d="M96.5 10.8 75.9.9a6.2 6.2 0 0 0-7.1 1.2L29.4 38 12.2 25a4.2 4.2 0 0 0-5.3.2L1.4 30.2a4.2 4.2 0 0 0 0 6.2L16.3 50 1.4 63.6a4.2 4.2 0 0 0 0 6.2l5.5 5a4.2 4.2 0 0 0 5.3.2l17.2-13L68.8 98a6.2 6.2 0 0 0 7.1 1.2l20.6-9.9a6.2 6.2 0 0 0 3.5-5.6V16.4a6.2 6.2 0 0 0-3.5-5.6ZM75 72.7 45.1 50 75 27.3Z"/></svg>
<div class="a" style="left:330px;top:574px;width:32px;height:2px;background:#9fcdf0"></div>
<div class="a" style="left:363px;top:549.5px;width:32px;height:26.5px;background:#b3692b"></div>
<div class="a" style="left:363px;top:574px;width:32px;height:2px;background:repeating-linear-gradient(90deg,#f07f1f 0 2px,#c87030 2px 3px)"></div>
<!-- weather -->
<svg class="icon" style="left:709.5px;top:554px" width="17" height="16" viewBox="0 0 17 16"><path d="M9.5 1.6A7 7 0 1 1 2 10.5 5.6 5.6 0 0 0 9.5 1.6z" fill="#f3a533"/><ellipse cx="5.6" cy="4.6" rx="4.8" ry="2.6" fill="#dde8f2"/><ellipse cx="6.4" cy="3" rx="2.6" ry="2.3" fill="#dde8f2"/><ellipse cx="11.8" cy="12.6" rx="4.8" ry="2.5" fill="#cfdeec"/><ellipse cx="12.3" cy="10.9" rx="2.5" ry="2.2" fill="#cfdeec"/></svg>
<div class="ui" style="left:732px;top:558.5px;font-size:9.8px;line-height:10px;height:10px;color:#ffffff;transform:scaleX(0.88);transform-origin:0 0">19°C</div>
<div class="ui" style="left:757px;top:558.5px;font-size:9.8px;line-height:10px;height:10px;color:#ffffff;transform:scaleX(0.963);transform-origin:0 0">Partly cloudy</div>
<!-- tray -->
<svg class="icon" style="left:827px;top:559.5px" width="10" height="6" viewBox="0 0 10 6"><path d="M0.7 5.3 5 1l4.3 4.3" fill="none" stroke="#ffffff" stroke-width="1"/></svg>
<svg class="icon" style="left:844px;top:557.5px" width="10" height="11" viewBox="0 0 10 11"><g fill="none" stroke="#e0e0e0" stroke-width="0.9"><circle cx="5" cy="5.5" r="4.3"/><rect x="2.5" y="3.5" width="4" height="4"/><path d="M6.5 4.5l2 -1v4l-2-1"/></g></svg>
<svg class="icon" style="left:858px;top:557px" width="12" height="11" viewBox="0 0 12 11"><rect x="0.5" y="0.5" width="10.5" height="9" fill="none" stroke="#e8e8e8" stroke-width="1"/><rect x="2.5" y="2.5" width="4" height="3" fill="none" stroke="#e8e8e8" stroke-width="0.8"/><circle cx="9.2" cy="8.3" r="2.3" fill="#f5a623"/></svg>
<svg class="icon" style="left:876px;top:557.5px" width="9" height="10" viewBox="0 0 9 10"><g fill="none" stroke="#dcdcdc" stroke-width="0.9"><path d="M0.5 9.5a8 8 0 0 1 8-8M2.5 9.5a6 6 0 0 1 6-6M4.5 9.5a4 4 0 0 1 4-4M6.5 9.5a2 2 0 0 1 2-2"/></g></svg>
<svg class="icon" style="left:890px;top:558.5px" width="12" height="8" viewBox="0 0 12 8"><g fill="none" stroke="#e8e8e8" stroke-width="0.9"><rect x="2.5" y="1.5" width="8.5" height="5.5"/><path d="M0.5 3v2.5M1 0.5v2"/></g></svg>
<svg class="icon" style="left:905.5px;top:557.5px" width="12" height="11" viewBox="0 0 12 11"><g fill="none" stroke="#e8e8e8" stroke-width="0.9"><path d="M0.5 3.5h2L5.5 1v9L2.5 7.5h-2z"/><path d="M7.5 3.5a2.5 2.5 0 0 1 0 4M9 2a4.5 4.5 0 0 1 0 7M10.5 0.8a6.3 6.3 0 0 1 0 9.4"/></g></svg>
<div class="ui" style="left:924.5px;top:557.7px;font-size:8.6px;line-height:10px;height:10px;color:#ffffff;transform:scaleX(0.816);transform-origin:0 0">ENG</div>
<div class="ui" style="left:952.3px;top:551px;font-size:8.6px;line-height:10px;height:10px;color:#ffffff;transform:scaleX(0.91);transform-origin:0 0">1:24 AM</div>
<div class="ui" style="left:947.8px;top:564px;font-size:8.6px;line-height:10px;height:10px;color:#ffffff;transform:scaleX(0.947);transform-origin:0 0">4/17/2023</div>
<svg class="icon" style="left:996px;top:556.5px" width="17" height="17" viewBox="0 0 17 17"><path d="M0.5 0.5h11v8.5H5.5L2.5 11.5V9h-2z" fill="#e8e8e8"/><path d="M2.5 3h6M2.5 5h6M2.5 7h4" stroke="#5a5a5a" stroke-width="0.7"/><circle cx="11" cy="11.5" r="5" fill="#2b2b2b" stroke="#8a8a8a" stroke-width="0.7"/><text x="11" y="14.5" font-family="Liberation Sans" font-size="8" fill="#ffffff" text-anchor="middle">3</text></svg>
<div class="a" style="left:1020.5px;top:549.5px;width:1px;height:26.5px;background:#6a665c"></div>

</body></html>
